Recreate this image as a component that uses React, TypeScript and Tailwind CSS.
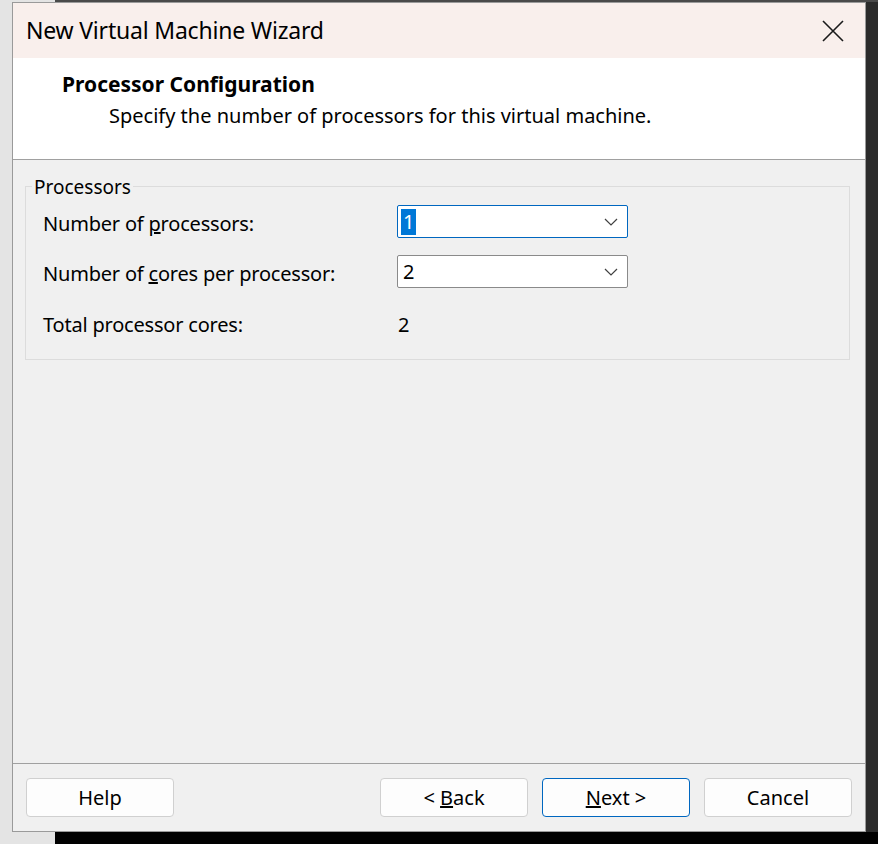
import React from "react"

function Chevron() {
  return (
    <svg width="14" height="8" viewBox="0 0 14 8" className="text-[#404040]">
      <path d="M1 1l6 6 6-6" fill="none" stroke="currentColor" strokeWidth="1.2" />
    </svg>
  )
}

function Combo({ value, focused }: { value: string; focused?: boolean }) {
  return (
    <div
      className={
        "flex h-[33px] w-[231px] items-center justify-between rounded-[2px] border bg-white pl-[3px] pr-[9px] " +
        (focused ? "border-[#0067c0]" : "border-[#8a8a8a]")
      }
    >
      {focused ? (
        <span className="flex h-[26px] items-center bg-[#0078d7] px-[2px] text-white">{value}</span>
      ) : (
        <span className="px-[2px]">{value}</span>
      )}
      <Chevron />
    </div>
  )
}

function Button({ children, primary }: { children: React.ReactNode; primary?: boolean }) {
  return (
    <button
      className={
        "flex h-[39px] w-[148px] items-center justify-center rounded-[4px] border bg-[#fdfdfd] text-[20px] text-black " +
        (primary ? "border-[#0067c0]" : "border-[#d0d0d0]")
      }
    >
      <span className="whitespace-pre">{children}</span>
    </button>
  )
}

export default function App() {
  return (
    <div
      className="flex h-[844px] w-[878px] flex-col overflow-hidden bg-black text-black"
      style={{ fontFamily: '"Noto Sans", "Open Sans", sans-serif' }}
    >
      {/* desktop top edge */}
      <div className="flex h-[2px] shrink-0">
        <div className="w-[55px] bg-[#e4e4e4]" />
        <div className="flex-1 bg-[#4a4a4a]" />
      </div>

      <div className="flex h-[830px] shrink-0">
        <div className="w-[12px] bg-[#e4e4e4]" />

        {/* dialog */}
        <div className="flex w-[854px] flex-col border border-[#9a9a9a] bg-[#f0f0f0]">
          {/* title bar */}
          <div className="flex h-[55px] shrink-0 items-center justify-between bg-[#f9efec] pl-[13px] pr-[21px]">
            <span className="text-[23px] tracking-[-0.2px]">New Virtual Machine Wizard</span>
            <svg width="22" height="22" viewBox="0 0 22 22" className="text-[#1a1a1a]">
              <path d="M1 1l20 20M21 1L1 21" fill="none" stroke="currentColor" strokeWidth="1.6" />
            </svg>
          </div>

          {/* header */}
          <div className="flex h-[102px] shrink-0 flex-col border-b border-[#a0a0a0] bg-white pl-[49px] pt-[11px]">
            <span className="text-[21px] font-bold leading-[30px]">Processor Configuration</span>
            <span className="pl-[47px] text-[20px] leading-[33px]">
              Specify the number of processors for this virtual machine.
            </span>
          </div>

          {/* body */}
          <div className="flex flex-1 flex-col pl-[12px] pr-[15px] pt-[16px]">
            <div className="relative mt-[10px] h-[174px] border border-[#dcdcdc]">
              <span className="absolute -top-[13px] left-[6px] bg-[#f0f0f0] px-[2px] text-[19px] leading-[26px]">
                Processors
              </span>
              <div className="grid grid-cols-[354px_1fr] items-center gap-y-[17px] pl-[17px] pt-[18px] text-[20px] tracking-[-0.2px]">
                <span className="translate-y-[2px]">
                  Number of <u>p</u>rocessors:
                </span>
                <Combo value="1" focused />
                <span className="translate-y-[2px]">
                  Number of <u>c</u>ores per processor:
                </span>
                <Combo value="2" />
                <span className="mt-[5px]">Total processor cores:</span>
                <span className="mt-[5px] pl-[1px]">2</span>
              </div>
            </div>
          </div>

          {/* footer */}
          <div className="flex h-[68px] shrink-0 items-start justify-between border-t border-[#a0a0a0] px-[13px] pt-[14px]">
            <Button>Help</Button>
            <div className="flex gap-[14px]">
              <Button>
                {"< "}
                <u>B</u>ack
              </Button>
              <Button primary>
                <u>N</u>ext {">"}
              </Button>
              <Button>Cancel</Button>
            </div>
          </div>
        </div>

        <div className="w-[12px] bg-[#2b2b2b]" />
      </div>

      {/* desktop bottom edge */}
      <div className="flex flex-1">
        <div className="w-[55px] bg-[#e4e4e4]" />
        <div className="flex-1 bg-black" />
      </div>
    </div>
  )
}
